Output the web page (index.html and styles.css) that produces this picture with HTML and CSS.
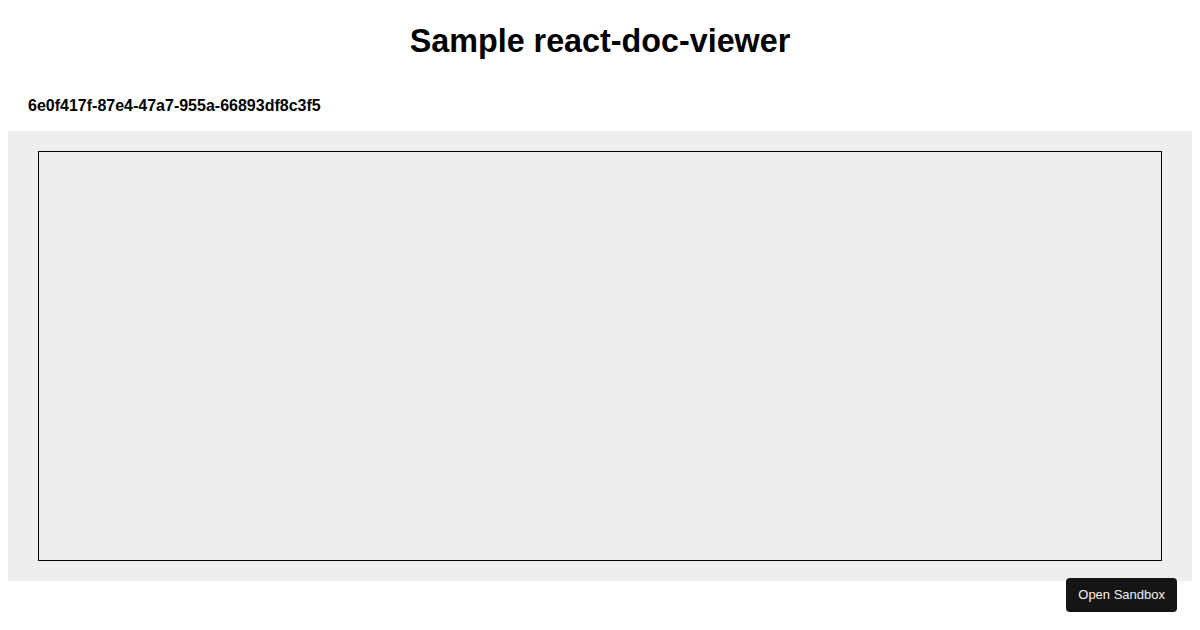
FILE: index.html
```html
<!DOCTYPE html>
<html lang="en">
<head>
<meta charset="UTF-8">
<meta name="viewport" content="width=device-width, initial-scale=1.0">
<title>Sample react-doc-viewer</title>
<link rel="stylesheet" href="styles.css">
</head>
<body>
  <h1>Sample react-doc-viewer</h1>
  <div class="doc-id">6e0f417f-87e4-47a7-955a-66893df8c3f5</div>
  <div class="viewer-container">
    <div class="viewer"></div>
  </div>
  <a class="sandbox-button" href="#">Open Sandbox</a>
</body>
</html>
```

FILE: styles.css
```css
body {
  font-family: "Liberation Sans", Arial, sans-serif;
  margin: 8px;
  color: #000;
}
h1 {
  font-size: 32.3px;
  font-weight: bold;
  text-align: center;
  margin: 15px 0 21.44px;
}
.doc-id {
  padding: 16px 20px;
  font-size: 16px;
  font-weight: bold;
  line-height: 18px;
}
.viewer-container {
  background-color: #eeeeee;
  padding: 20px 30px;
}
.viewer {
  height: 408px;
  border: 1px solid #000;
}
.sandbox-button {
  position: fixed;
  right: 23px;
  bottom: 18px;
  background-color: #151515;
  color: #f2f2f2;
  font-size: 13px;
  line-height: 18px;
  padding: 8px 12px;
  border-radius: 4px;
  text-decoration: none;
}
```
